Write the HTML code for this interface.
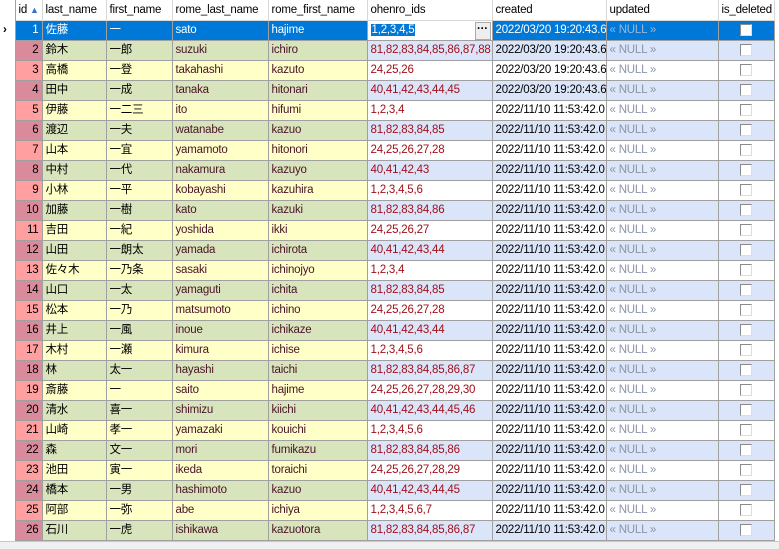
<!DOCTYPE html><html><head><meta charset="utf-8"><style>
body{margin:0;width:779px;height:548px;background:#fff;overflow:hidden;font-family:"Liberation Sans","Noto Sans CJK JP",sans-serif;font-size:11.5px;}
table{position:absolute;left:0;top:0;border-collapse:collapse;table-layout:fixed;width:774px;}
td,th{height:19px;padding:0 0 0 3px;white-space:nowrap;overflow:hidden;border:1px solid #a0a0a0;text-align:left;font-weight:normal;line-height:19px;color:#000;letter-spacing:-0.2px}
th{background:#fff;border-top:none;height:20px;border-color:#d8d8d8}
td.m,th.m{border:none;border-right:1px solid #a0a0a0;background:#fff;padding:0}
td.i{text-align:right;padding-right:3px;padding-left:0}
tr.o td.i{background:#ff9f9f} tr.e td.i{background:#d98b9b}
tr.o td.n{background:#ffffc8} tr.e td.n{background:#d8e4bc}
tr.o td.w{background:#fff} tr.e td.w{background:#dbe5f9}
td.r{color:#4a1428} td.h{color:#a0101a}
td.u{color:#8a94a8}
td.c{text-align:center;padding:0}
.cb{display:inline-block;width:10px;height:10px;border:1px solid #8a8a8a;border-right-color:#ddd;border-bottom-color:#ddd;background:#fff;vertical-align:middle}
tr.s td{background:#0078d7 !important;color:#fff}
tr.s td.u{color:#9ab8dc}
tr.s td.ed{background:#fff !important;position:relative}
.sel{background:#0078d7;color:#fff;padding:0 1px}
.btn{position:absolute;right:1px;top:1px;width:14px;height:16px;background:#eee;border:1px solid #aaa;color:#000;text-align:center;line-height:12px;font-weight:bold}
.bot{position:absolute;left:0;top:541px;width:779px;height:7px;background:#f0f0f0;border-top:1px solid #c8c8c8}
</style></head><body>
<table>
<colgroup><col style="width:15px"><col style="width:27px"><col style="width:64px"><col style="width:66px"><col style="width:96px"><col style="width:99px"><col style="width:125px"><col style="width:114px"><col style="width:112px"><col style="width:56px"></colgroup>
<tr><th class="m" style="background:#fff"></th><th>id <span style="color:#3070d0;font-size:9px;vertical-align:top">▲</span></th><th>last_name</th><th>first_name</th><th>rome_last_name</th><th>rome_first_name</th><th>ohenro_ids</th><th>created</th><th>updated</th><th>is_deleted</th></tr>
<tr class="o s"><td class="m" style="background:#fff !important;color:#000;font-weight:bold">&nbsp;›</td><td class="i">1</td><td class="n">佐藤</td><td class="n">一</td><td class="n r">sato</td><td class="n r">hajime</td><td class="ed"><span class="sel">1,2,3,4,5</span><span class="btn">···</span></td><td class="w">2022/03/20 19:20:43.6</td><td class="w u">« NULL »</td><td class="w c"><span class="cb"></span></td></tr>
<tr class="e"><td class="m"></td><td class="i">2</td><td class="n">鈴木</td><td class="n">一郎</td><td class="n r">suzuki</td><td class="n r">ichiro</td><td class="w h">81,82,83,84,85,86,87,88</td><td class="w">2022/03/20 19:20:43.6</td><td class="w u">« NULL »</td><td class="w c"><span class="cb"></span></td></tr>
<tr class="o"><td class="m"></td><td class="i">3</td><td class="n">高橋</td><td class="n">一登</td><td class="n r">takahashi</td><td class="n r">kazuto</td><td class="w h">24,25,26</td><td class="w">2022/03/20 19:20:43.6</td><td class="w u">« NULL »</td><td class="w c"><span class="cb"></span></td></tr>
<tr class="e"><td class="m"></td><td class="i">4</td><td class="n">田中</td><td class="n">一成</td><td class="n r">tanaka</td><td class="n r">hitonari</td><td class="w h">40,41,42,43,44,45</td><td class="w">2022/03/20 19:20:43.6</td><td class="w u">« NULL »</td><td class="w c"><span class="cb"></span></td></tr>
<tr class="o"><td class="m"></td><td class="i">5</td><td class="n">伊藤</td><td class="n">一二三</td><td class="n r">ito</td><td class="n r">hifumi</td><td class="w h">1,2,3,4</td><td class="w">2022/11/10 11:53:42.0</td><td class="w u">« NULL »</td><td class="w c"><span class="cb"></span></td></tr>
<tr class="e"><td class="m"></td><td class="i">6</td><td class="n">渡辺</td><td class="n">一夫</td><td class="n r">watanabe</td><td class="n r">kazuo</td><td class="w h">81,82,83,84,85</td><td class="w">2022/11/10 11:53:42.0</td><td class="w u">« NULL »</td><td class="w c"><span class="cb"></span></td></tr>
<tr class="o"><td class="m"></td><td class="i">7</td><td class="n">山本</td><td class="n">一宜</td><td class="n r">yamamoto</td><td class="n r">hitonori</td><td class="w h">24,25,26,27,28</td><td class="w">2022/11/10 11:53:42.0</td><td class="w u">« NULL »</td><td class="w c"><span class="cb"></span></td></tr>
<tr class="e"><td class="m"></td><td class="i">8</td><td class="n">中村</td><td class="n">一代</td><td class="n r">nakamura</td><td class="n r">kazuyo</td><td class="w h">40,41,42,43</td><td class="w">2022/11/10 11:53:42.0</td><td class="w u">« NULL »</td><td class="w c"><span class="cb"></span></td></tr>
<tr class="o"><td class="m"></td><td class="i">9</td><td class="n">小林</td><td class="n">一平</td><td class="n r">kobayashi</td><td class="n r">kazuhira</td><td class="w h">1,2,3,4,5,6</td><td class="w">2022/11/10 11:53:42.0</td><td class="w u">« NULL »</td><td class="w c"><span class="cb"></span></td></tr>
<tr class="e"><td class="m"></td><td class="i">10</td><td class="n">加藤</td><td class="n">一樹</td><td class="n r">kato</td><td class="n r">kazuki</td><td class="w h">81,82,83,84,86</td><td class="w">2022/11/10 11:53:42.0</td><td class="w u">« NULL »</td><td class="w c"><span class="cb"></span></td></tr>
<tr class="o"><td class="m"></td><td class="i">11</td><td class="n">吉田</td><td class="n">一紀</td><td class="n r">yoshida</td><td class="n r">ikki</td><td class="w h">24,25,26,27</td><td class="w">2022/11/10 11:53:42.0</td><td class="w u">« NULL »</td><td class="w c"><span class="cb"></span></td></tr>
<tr class="e"><td class="m"></td><td class="i">12</td><td class="n">山田</td><td class="n">一朗太</td><td class="n r">yamada</td><td class="n r">ichirota</td><td class="w h">40,41,42,43,44</td><td class="w">2022/11/10 11:53:42.0</td><td class="w u">« NULL »</td><td class="w c"><span class="cb"></span></td></tr>
<tr class="o"><td class="m"></td><td class="i">13</td><td class="n">佐々木</td><td class="n">一乃条</td><td class="n r">sasaki</td><td class="n r">ichinojyo</td><td class="w h">1,2,3,4</td><td class="w">2022/11/10 11:53:42.0</td><td class="w u">« NULL »</td><td class="w c"><span class="cb"></span></td></tr>
<tr class="e"><td class="m"></td><td class="i">14</td><td class="n">山口</td><td class="n">一太</td><td class="n r">yamaguti</td><td class="n r">ichita</td><td class="w h">81,82,83,84,85</td><td class="w">2022/11/10 11:53:42.0</td><td class="w u">« NULL »</td><td class="w c"><span class="cb"></span></td></tr>
<tr class="o"><td class="m"></td><td class="i">15</td><td class="n">松本</td><td class="n">一乃</td><td class="n r">matsumoto</td><td class="n r">ichino</td><td class="w h">24,25,26,27,28</td><td class="w">2022/11/10 11:53:42.0</td><td class="w u">« NULL »</td><td class="w c"><span class="cb"></span></td></tr>
<tr class="e"><td class="m"></td><td class="i">16</td><td class="n">井上</td><td class="n">一風</td><td class="n r">inoue</td><td class="n r">ichikaze</td><td class="w h">40,41,42,43,44</td><td class="w">2022/11/10 11:53:42.0</td><td class="w u">« NULL »</td><td class="w c"><span class="cb"></span></td></tr>
<tr class="o"><td class="m"></td><td class="i">17</td><td class="n">木村</td><td class="n">一瀬</td><td class="n r">kimura</td><td class="n r">ichise</td><td class="w h">1,2,3,4,5,6</td><td class="w">2022/11/10 11:53:42.0</td><td class="w u">« NULL »</td><td class="w c"><span class="cb"></span></td></tr>
<tr class="e"><td class="m"></td><td class="i">18</td><td class="n">林</td><td class="n">太一</td><td class="n r">hayashi</td><td class="n r">taichi</td><td class="w h">81,82,83,84,85,86,87</td><td class="w">2022/11/10 11:53:42.0</td><td class="w u">« NULL »</td><td class="w c"><span class="cb"></span></td></tr>
<tr class="o"><td class="m"></td><td class="i">19</td><td class="n">斎藤</td><td class="n">一</td><td class="n r">saito</td><td class="n r">hajime</td><td class="w h">24,25,26,27,28,29,30</td><td class="w">2022/11/10 11:53:42.0</td><td class="w u">« NULL »</td><td class="w c"><span class="cb"></span></td></tr>
<tr class="e"><td class="m"></td><td class="i">20</td><td class="n">清水</td><td class="n">喜一</td><td class="n r">shimizu</td><td class="n r">kiichi</td><td class="w h">40,41,42,43,44,45,46</td><td class="w">2022/11/10 11:53:42.0</td><td class="w u">« NULL »</td><td class="w c"><span class="cb"></span></td></tr>
<tr class="o"><td class="m"></td><td class="i">21</td><td class="n">山崎</td><td class="n">孝一</td><td class="n r">yamazaki</td><td class="n r">kouichi</td><td class="w h">1,2,3,4,5,6</td><td class="w">2022/11/10 11:53:42.0</td><td class="w u">« NULL »</td><td class="w c"><span class="cb"></span></td></tr>
<tr class="e"><td class="m"></td><td class="i">22</td><td class="n">森</td><td class="n">文一</td><td class="n r">mori</td><td class="n r">fumikazu</td><td class="w h">81,82,83,84,85,86</td><td class="w">2022/11/10 11:53:42.0</td><td class="w u">« NULL »</td><td class="w c"><span class="cb"></span></td></tr>
<tr class="o"><td class="m"></td><td class="i">23</td><td class="n">池田</td><td class="n">寅一</td><td class="n r">ikeda</td><td class="n r">toraichi</td><td class="w h">24,25,26,27,28,29</td><td class="w">2022/11/10 11:53:42.0</td><td class="w u">« NULL »</td><td class="w c"><span class="cb"></span></td></tr>
<tr class="e"><td class="m"></td><td class="i">24</td><td class="n">橋本</td><td class="n">一男</td><td class="n r">hashimoto</td><td class="n r">kazuo</td><td class="w h">40,41,42,43,44,45</td><td class="w">2022/11/10 11:53:42.0</td><td class="w u">« NULL »</td><td class="w c"><span class="cb"></span></td></tr>
<tr class="o"><td class="m"></td><td class="i">25</td><td class="n">阿部</td><td class="n">一弥</td><td class="n r">abe</td><td class="n r">ichiya</td><td class="w h">1,2,3,4,5,6,7</td><td class="w">2022/11/10 11:53:42.0</td><td class="w u">« NULL »</td><td class="w c"><span class="cb"></span></td></tr>
<tr class="e"><td class="m"></td><td class="i">26</td><td class="n">石川</td><td class="n">一虎</td><td class="n r">ishikawa</td><td class="n r">kazuotora</td><td class="w h">81,82,83,84,85,86,87</td><td class="w">2022/11/10 11:53:42.0</td><td class="w u">« NULL »</td><td class="w c"><span class="cb"></span></td></tr>
</table>
<div class="bot"></div>
</body></html>
